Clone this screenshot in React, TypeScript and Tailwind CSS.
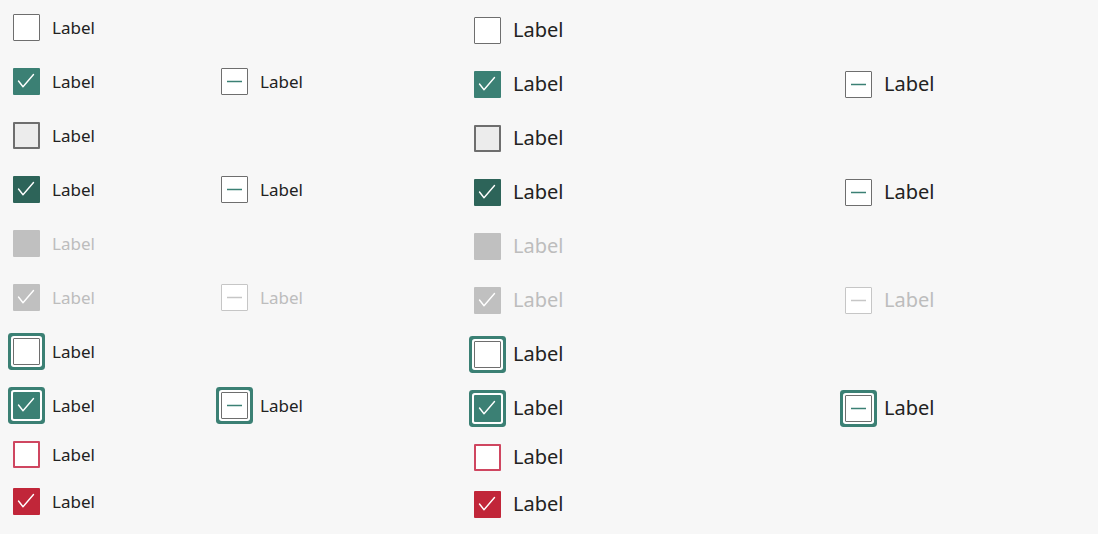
import React from "react";

type Kind =
  | "empty"
  | "checked"
  | "pressed"
  | "hover"
  | "disabled"
  | "disabledChecked"
  | "error"
  | "errorChecked"
  | "indeterminate"
  | "indeterminateDisabled";

type Row = { a: Kind; b?: Kind; focus?: boolean; h: string };

const rows: Row[] = [
  { a: "empty", h: "h-[54px]" },
  { a: "checked", b: "indeterminate", h: "h-[54px]" },
  { a: "pressed", h: "h-[54px]" },
  { a: "hover", b: "indeterminate", h: "h-[54px]" },
  { a: "disabled", h: "h-[54px]" },
  { a: "disabledChecked", b: "indeterminateDisabled", h: "h-[54px]" },
  { a: "empty", focus: true, h: "h-[54px]" },
  { a: "checked", b: "indeterminate", focus: true, h: "h-[54px]" },
  { a: "error", h: "h-[44px]" },
  { a: "errorChecked", h: "h-[50px]" },
];

// drawn on the full 27px box, so it is absolutely placed over the border
function Check() {
  return (
    <svg viewBox="0 0 27 27" className="absolute inset-0 h-[27px] w-[27px]">
      <polyline
        points="5.5,13 10,18.8 20.5,6.5"
        fill="none"
        stroke="white"
        strokeWidth="1.4"
        strokeLinecap="round"
        strokeLinejoin="round"
      />
    </svg>
  );
}

function Dash({ color }: { color: string }) {
  return (
    <svg viewBox="0 0 27 27" className="absolute inset-0 h-[27px] w-[27px]">
      <line x1="6" y1="13.5" x2="21" y2="13.5" stroke={color} strokeWidth="1.5" />
    </svg>
  );
}

function Box({ kind, focus }: { kind: Kind; focus?: boolean }) {
  const ring = focus ? "shadow-[0_0_0_2px_#ffffff,0_0_0_5px_#3b8074]" : "";
  const styles: Record<Kind, string> = {
    empty: "border border-[#6e6e6e] bg-white",
    checked: "bg-[#3b8074]",
    pressed: "border-2 border-[#6e6e6e] bg-[#ececec]",
    hover: "bg-[#2d6459]",
    disabled: "bg-[#c0c0c0]",
    disabledChecked: "bg-[#c0c0c0]",
    error: "border-2 border-[#cf4660] bg-white",
    errorChecked: "bg-[#c12639]",
    indeterminate: "border border-[#6e6e6e] bg-white",
    indeterminateDisabled: "border border-[#c6c6c6] bg-white",
  };
  return (
    <div className="relative h-[27px] w-[27px] shrink-0">
      <div className={`h-[27px] w-[27px] rounded-[1px] ${styles[kind]} ${ring}`} />
      {(kind === "checked" ||
        kind === "hover" ||
        kind === "disabledChecked" ||
        kind === "errorChecked") && <Check />}
      {kind === "indeterminate" && <Dash color="#3b8074" />}
      {kind === "indeterminateDisabled" && <Dash color="#c6c6c6" />}
    </div>
  );
}

function Item({ kind, focus, size }: { kind: Kind; focus?: boolean; size: string }) {
  const disabled =
    kind === "disabled" || kind === "disabledChecked" || kind === "indeterminateDisabled";
  return (
    <div className="flex items-center gap-[12px]">
      <Box kind={kind} focus={focus} />
      <span className={`${size} leading-none ${disabled ? "text-[#bdbdbd]" : "text-[#222222]"}`}>
        Label
      </span>
    </div>
  );
}

function Section({ colW, size, pad }: { colW: string; size: string; pad: string }) {
  return (
    <div className={`flex flex-col ${pad}`}>
      {rows.map((r, i) => (
        <div key={i} className={`flex items-center ${r.h}`}>
          <div className={colW}>
            <Item kind={r.a} focus={r.focus} size={size} />
          </div>
          {r.b && <Item kind={r.b} focus={r.focus} size={size} />}
        </div>
      ))}
    </div>
  );
}

export default function App() {
  return (
    <div
      className="flex h-[534px] w-[1098px] overflow-hidden bg-[#f7f7f7]"
      style={{ fontFamily: '"Noto Sans", "Open Sans", sans-serif' }}
    >
      <div className="w-[474px] shrink-0 pl-[13px]">
        <Section colW="w-[208px]" size="text-[17px]" pad="pt-0" />
      </div>
      <div className="flex-1">
        <Section colW="w-[371px]" size="text-[20px]" pad="pt-[3px]" />
      </div>
    </div>
  );
}
